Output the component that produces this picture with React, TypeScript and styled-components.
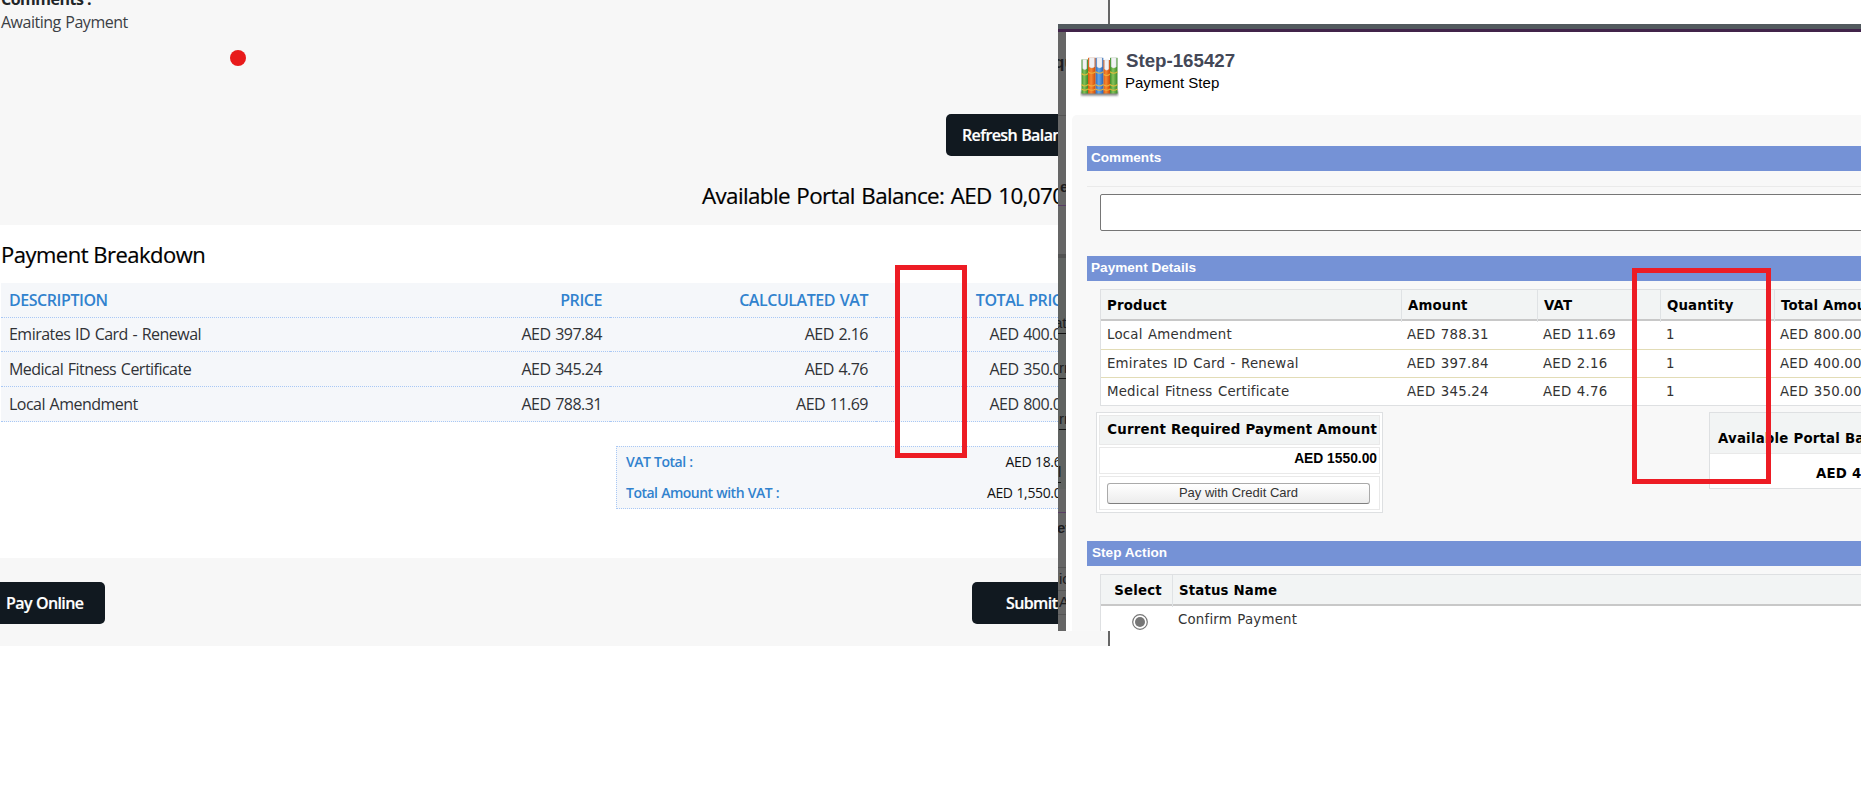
import React from "react";
import styled, { createGlobalStyle, css } from "styled-components";

const ui = `"Open Sans", "Noto Sans", sans-serif`;
const arial = `"Liberation Sans", Arial, sans-serif`;
const verdana = `"DejaVu Sans", Verdana, sans-serif`;

const Global = createGlobalStyle`
  *, *::before, *::after { box-sizing: border-box; }
  body { margin: 0; background: #fff; overflow: hidden; }
`;

const Stage = styled.div`
  position: relative;
  width: 1861px;
  height: 785px;
  overflow: hidden;
  background: #fff;
`;

/* ---------- portal page ---------- */

const Portal = styled.main`
  width: 1110px;
  height: 646px;
  border-right: 2px solid #666;
  background: #f7f7f7;
  display: flex;
  flex-direction: column;
  overflow: hidden;
  font-family: ${ui};
  font-size: 16px;
  color: #212529;
  white-space: nowrap;
`;

const Summary = styled.section`
  height: 225px;
  flex: none;
  display: flex;
  flex-direction: column;
`;

const CommentLabel = styled.div`
  height: 10px;
  padding-left: 1px;
  display: flex;
  align-items: flex-end;
  font-weight: 700;
  letter-spacing: -0.5px;
  line-height: 22px;
`;

const CommentText = styled.div`
  height: 24px;
  padding-left: 1px;
  line-height: 25px;
  color: #3c4045;
  letter-spacing: -0.5px;
  word-spacing: 1px;
`;

const RefreshRow = styled.div`
  display: flex;
  justify-content: flex-end;
  margin-top: 80px;
  padding-right: 8px;
`;

const DarkButton = styled.button<{ $w: number; $pad: number; $flatLeft?: boolean }>`
  width: ${(p) => p.$w}px;
  height: 42px;
  border: 0;
  border-radius: ${(p) => (p.$flatLeft ? "0 5px 5px 0" : "5px")};
  padding: 0 0 0 ${(p) => p.$pad}px;
  background: #111920;
  color: #fff;
  text-align: left;
  font: 600 16px ${ui};
  letter-spacing: -0.6px;
  word-spacing: 0.5px;
  -webkit-text-stroke: 0.2px #fff;
`;

const Balance = styled.div`
  margin-top: 25px;
  padding-left: 702px;
  font-size: 22.4px;
  line-height: 30px;
  letter-spacing: -0.62px;
  word-spacing: 1.3px;
  color: #000;
  -webkit-text-stroke: 0.2px #000;
`;

const Breakdown = styled.section`
  height: 333px;
  flex: none;
  background: #fff;
  padding: 14px 0 0 1px;
`;

const Heading = styled.h2`
  margin: 0;
  height: 44px;
  font-size: 22px;
  font-weight: 400;
  line-height: 30px;
  letter-spacing: -0.5px;
  color: #000;
  -webkit-text-stroke: 0.2px #000;
`;

const Grid = styled.div`
  width: 1077px;
  background: #f5f7fa;
`;

const GridRow = styled.div<{ $h: number; $head?: boolean }>`
  display: grid;
  grid-template-columns: 430px 179px 266px 202px;
  height: ${(p) => p.$h}px;
  > * { border-bottom: 1px dotted #a9c8f5; }
  line-height: ${(p) => p.$h - 1}px;
  color: #303236;
  letter-spacing: -0.52px;
  word-spacing: 1px;
  ${(p) =>
    p.$head &&
    css`
      color: #3182ce;
      font-weight: 600;
      letter-spacing: -0.45px;
    `}
`;

const GridCell = styled.div<{ $right?: boolean }>`
  padding: 0 8px;
  text-align: ${(p) => (p.$right ? "right" : "left")};
`;

const Totals = styled.div`
  margin: 24px 0 0 615px;
  width: 462px;
  height: 63px;
  border: 1px dotted #a9c8f5;
  background: #f5f7fa;
  padding: 0 8px 0 9px;
  font-size: 14px;
  font-weight: 600;
  letter-spacing: -0.5px;
`;

const TotalRow = styled.div`
  display: flex;
  justify-content: space-between;
  height: 31px;
  line-height: 30px;
  color: #3182ce;
  word-spacing: 0.5px;
`;

const TotalValue = styled.span`
  color: #111;
  font-weight: 500;
  letter-spacing: -0.35px;
`;

const Actions = styled.footer`
  display: flex;
  justify-content: space-between;
  padding: 24px 8px 0 0;
`;

/* ---------- annotations ---------- */

const Dot = styled.div`
  position: absolute;
  left: 230px;
  top: 50px;
  width: 16px;
  height: 16px;
  border-radius: 50%;
  background: #e81a1b;
`;

const Marker = styled.div<{ $x: number; $y: number; $w: number; $h: number }>`
  position: absolute;
  left: ${(p) => p.$x}px;
  top: ${(p) => p.$y}px;
  width: ${(p) => p.$w}px;
  height: ${(p) => p.$h}px;
  border: 5px solid #ed1c24;
`;

/* ---------- dialog ---------- */

const Overlay = styled.div`
  position: absolute;
  left: 1058px;
  top: 24px;
  width: 803px;
  height: 607px;
  overflow: hidden;
  border-top: 5px solid #525a5e;
  background: #fff;
  white-space: nowrap;
`;

const OverlayInner = styled.div`
  border-top: 3px solid #41244a;
  display: flex;
  height: 602px;
`;

const Backdrop = styled.div`
  width: 8px;
  flex: none;
  overflow: hidden;
  background: #666;
  font: 400 15px/20px ${arial};
  color: #1d1d1f;
`;

const Sliver = styled.div<{ $h: number; $bg?: string; $pad?: number; $line?: string; $bold?: boolean }>`
  height: ${(p) => p.$h}px;
  overflow: hidden;
  padding-top: ${(p) => p.$pad ?? 0}px;
  background: ${(p) => p.$bg ?? "#666"};
  ${(p) => p.$line && `border-bottom: 1px solid ${p.$line};`}
  font-weight: ${(p) => (p.$bold ? 700 : 400)};
`;

const Clip = styled.span<{ $shift: number; $u?: boolean; $size?: number }>`
  display: inline-block;
  height: 20px;
  margin-left: ${(p) => p.$shift}px;
  font-size: ${(p) => p.$size ?? 15}px;
  ${(p) => p.$u && "border-bottom: 1px solid #111; line-height: 18px;"}
`;

const Dialog = styled.section`
  flex: 1;
  min-width: 0;
  background: #fff;
`;

const DialogHead = styled.header`
  height: 83px;
  display: flex;
  padding: 25px 0 0 14px;
`;

const TitleBlock = styled.div`
  padding-left: 6px;
  font-family: ${arial};
`;

const Title = styled.div`
  margin-top: -8px;
  padding-left: 1px;
  font-size: 18.7px;
  font-weight: 700;
  line-height: 24px;
  color: #444857;
`;

const Subtitle = styled.div`
  font-size: 15px;
  line-height: 19px;
  color: #000;
`;

const Body = styled.div`
  margin-left: 6px;
  height: 516px;
  border-top-left-radius: 5px;
  background: #f8f8f8;
  padding: 31px 0 0 15px;
  overflow: hidden;
`;

const Bar = styled.div<{ $pad?: number }>`
  height: 25px;
  padding-left: ${(p) => p.$pad ?? 4}px;
  background: #7592d6;
  color: #fff;
  font: 700 13.6px/24px ${arial};
`;

const Rule = styled.div`
  height: 1px;
  margin-top: 15px;
  background: #eaeaea;
`;

const CommentBox = styled.textarea`
  display: block;
  margin: 7px 0 25px 13px;
  width: 790px;
  height: 37px;
  resize: none;
  border: 1px solid #767676;
  border-radius: 2px;
  background: #fff;
`;

const Sheet = styled.div<{ $cols: string }>`
  --cols: ${(p) => p.$cols};
  margin: 8px 0 0 13px;
  width: 900px;
  border: 1px solid #dee0e2;
  background: #fff;
  font-family: ${verdana};
  font-size: 13.33px;
  color: #333;
`;

const SheetHead = styled.div`
  display: grid;
  grid-template-columns: var(--cols);
  height: 31px;
  border-bottom: 2px solid #c8c8c8;
  background: #f2f4f4;
  color: #000;
  font-weight: 700;
  line-height: 32px;
  letter-spacing: 0.15px;
  > * + * { border-left: 1px solid #dfe2e4; }
  > * { padding-left: 6px; }
`;

const SheetRow = styled.div`
  display: grid;
  grid-template-columns: var(--cols);
  height: 28px;
  line-height: 28px;
  letter-spacing: 0.2px;
  word-spacing: 1px;
  & + & { border-top: 1px solid #e2dcb6; line-height: 27px; }
  > * { padding-left: 6px; }
`;

const Panels = styled.div`
  display: flex;
  align-items: flex-start;
  margin: 6px 0 28px 9px;
  font: 700 13.33px ${verdana};
  letter-spacing: 0.2px;
  color: #000;
`;

const PayPanel = styled.div`
  flex: none;
  width: 287px;
  height: 101px;
  border: 1px solid #dee0e2;
  background: #fff;
  padding: 2px;
  display: flex;
  flex-direction: column;
  gap: 2px;
`;

const PayCell = styled.div<{ $h: number; $bg?: string; $arial?: boolean }>`
  height: ${(p) => p.$h}px;
  border: 1px solid #e9e9e9;
  background: ${(p) => p.$bg ?? "#fff"};
  line-height: ${(p) => p.$h - 2}px;
  text-align: right;
  padding-right: 2px;
  ${(p) => p.$arial && `font: 700 13.8px/${p.$h - 5}px ${arial}; letter-spacing: 0;`}
`;

const CardButton = styled.button`
  display: block;
  width: 263px;
  height: 21px;
  margin: 6px 0 0 7px;
  padding: 0;
  border: 1px solid #aaa;
  border-bottom-color: #7f7f7f;
  border-radius: 3px;
  background: linear-gradient(#fff, #ececec);
  color: #333;
  font: 400 13px/18px ${arial};
`;

const PortalPanel = styled.div`
  flex: none;
  margin-left: 326px;
  width: 300px;
  height: 77px;
  border: 1px solid #dee0e2;
  background: #fff;
`;

const PortalPanelHead = styled.div`
  height: 41px;
  border-bottom: 1px solid #e9e9e9;
  background: #f2f4f4;
  padding: 11px 0 0 8px;
  line-height: 30px;
`;

const PortalPanelValue = styled.div`
  padding-left: 106px;
  line-height: 40px;
`;

const SelectHead = styled.span`
  text-align: center;
  padding-right: 3px;
`;

const RadioCell = styled.div`
  display: flex;
  align-items: flex-start;
  justify-content: center;
  padding-top: 8px;
`;

const Books = () => (
  <svg width="39" height="41" viewBox="0 0 39 41">
    <defs>
      <linearGradient id="g" x1="0" x2="1"><stop offset="0" stopColor="#3c8f2b" /><stop offset=".4" stopColor="#86c45a" /><stop offset="1" stopColor="#3a8a28" /></linearGradient>
      <linearGradient id="o" x1="0" x2="1"><stop offset="0" stopColor="#dc560c" /><stop offset=".4" stopColor="#f88a34" /><stop offset="1" stopColor="#cc4806" /></linearGradient>
      <linearGradient id="b" x1="0" x2="1"><stop offset="0" stopColor="#2f6fc0" /><stop offset=".4" stopColor="#62a6ea" /><stop offset="1" stopColor="#2c66b4" /></linearGradient>
      <filter id="s" x="-20%" y="-100%" width="140%" height="300%"><feGaussianBlur stdDeviation="1" /></filter>
    </defs>
    <rect x="1" y="34" width="37" height="4.5" fill="#555" opacity=".75" filter="url(#s)" />
    {[
      { x: 1.5, w: 6.5, y: 2.5, fill: "g" },
      { x: 30, w: 7.5, y: 0.8, fill: "g" },
      { x: 23.3, w: 6.7, y: 3, fill: "o" },
      { x: 8, w: 7.7, y: 0.8, fill: "o" },
      { x: 15.7, w: 7.6, y: 0.8, fill: "b" },
    ].map(({ x, w, y, fill }) => (
      <g key={x}>
        <rect x={x} y={y} width={w} height={36.5 - y} fill={`url(#${fill})`} />
        <path d={`M${x + 1.2} ${y}h${w - 2.4}v9q${-(w - 2.4) / 2} 2.4 ${-(w - 2.4)} 0z`} fill="#f2f2f5" stroke="#c9c9d0" strokeWidth=".3" />
        <path
          d={`M${x} ${y + 14}q${w / 2} 3 ${w} 0M${x} 27.5q${w / 2} 3 ${w} 0M${x} 32q${w / 2} 2.6 ${w} 0`}
          fill="none"
          stroke="#f2bb3a"
          strokeWidth="1.1"
          opacity=".85"
        />
      </g>
    ))}
  </svg>
);

const Radio = () => (
  <svg width="16" height="16" viewBox="0 0 16 16">
    <circle cx="8" cy="8" r="7.3" fill="#fff" stroke="#767676" strokeWidth="1.2" />
    <circle cx="8" cy="8" r="5" fill="#767676" />
  </svg>
);

const fees = [
  { h: 34, name: "Emirates ID Card - Renewal", price: "AED 397.84", vat: "AED 2.16", total: "AED 400.00" },
  { h: 35, name: "Medical Fitness Certificate", price: "AED 345.24", vat: "AED 4.76", total: "AED 350.00" },
  { h: 35, name: "Local Amendment", price: "AED 788.31", vat: "AED 11.69", total: "AED 800.00" },
];
const sheetRows = [fees[2], fees[0], fees[1]];

export default function App() {
  return (
    <Stage>
      <Global />
      <Portal>
        <Summary>
          <CommentLabel>Comments :</CommentLabel>
          <CommentText>Awaiting Payment</CommentText>
          <RefreshRow><DarkButton $w={154} $pad={16}>Refresh Balance</DarkButton></RefreshRow>
          <Balance>Available Portal Balance: AED 10,070</Balance>
        </Summary>
        <Breakdown>
          <Heading>Payment Breakdown</Heading>
          <Grid>
            <GridRow $h={35} $head>
              <GridCell>DESCRIPTION</GridCell>
              <GridCell $right>PRICE</GridCell>
              <GridCell $right>CALCULATED VAT</GridCell>
              <GridCell $right>TOTAL PRICE</GridCell>
            </GridRow>
            {fees.map((f) => (
              <GridRow key={f.name} $h={f.h}>
                <GridCell>{f.name}</GridCell>
                <GridCell $right>{f.price}</GridCell>
                <GridCell $right>{f.vat}</GridCell>
                <GridCell $right>{f.total}</GridCell>
              </GridRow>
            ))}
          </Grid>
          <Totals>
            <TotalRow>VAT Total :<TotalValue>AED 18.61</TotalValue></TotalRow>
            <TotalRow>Total Amount with VAT :<TotalValue>AED 1,550.00</TotalValue></TotalRow>
          </Totals>
        </Breakdown>
        <Actions>
          <DarkButton $w={105} $pad={6} $flatLeft>Pay Online</DarkButton>
          <DarkButton $w={128} $pad={34}>Submit</DarkButton>
        </Actions>
      </Portal>

      <Overlay>
        <OverlayInner>
          <Backdrop>
            <Sliver $h={84} $pad={21} $line="#555" $bold><Clip $shift={-4} $size={17}>qu</Clip></Sliver>
            <Sliver $h={90} $pad={61} $line="#5a3f66" $bold><Clip $shift={2}>e</Clip></Sliver>
            <Sliver $h={48} />
            <Sliver $h={4} $bg="#525252" />
            <Sliver $h={76} $bg="#606361" $pad={55}><Clip $shift={-4} $u>at</Clip></Sliver>
            <Sliver $h={46} $bg="#606361" $pad={24}><Clip $shift={1} $u>rn</Clip></Sliver>
            <Sliver $h={50} $bg="#606361" $pad={29}><Clip $shift={1} $u>rn</Clip></Sliver>
            <Sliver $h={59} $bg="#606361" $pad={32}><Clip $shift={0} $u>l</Clip></Sliver>
            <Sliver $h={24} $line="#5a3f66" />
            <Sliver $h={55} $pad={5} $line="#555" $bold><Clip $shift={-1}>ev</Clip></Sliver>
            <Sliver $h={23} $pad={1} $line="#555"><Clip $shift={1}>ic</Clip></Sliver>
            <Sliver $h={24} $pad={1} $line="#555"><Clip $shift={1}>A</Clip></Sliver>
            <Sliver $h={16} />
          </Backdrop>
          <Dialog>
            <DialogHead>
              <Books />
              <TitleBlock>
                <Title>Step-165427</Title>
                <Subtitle>Payment Step</Subtitle>
              </TitleBlock>
            </DialogHead>
            <Body>
              <Bar>Comments</Bar>
              <Rule />
              <CommentBox />
              <Bar>Payment Details</Bar>
              <Sheet $cols="300px 136px 123px 114px 200px">
                <SheetHead>
                  <span>Product</span><span>Amount</span><span>VAT</span><span>Quantity</span><span>Total Amount</span>
                </SheetHead>
                {sheetRows.map((r) => (
                  <SheetRow key={r.name}>
                    <span>{r.name}</span><span>{r.price}</span><span>{r.vat}</span><span>1</span><span>{r.total}</span>
                  </SheetRow>
                ))}
              </Sheet>
              <Panels>
                <PayPanel>
                  <PayCell $h={30} $bg="#f2f4f4">Current Required Payment Amount</PayCell>
                  <PayCell $h={27} $arial>AED 1550.00</PayCell>
                  <PayCell $h={35}><CardButton>Pay with Credit Card</CardButton></PayCell>
                </PayPanel>
                <PortalPanel>
                  <PortalPanelHead>Available Portal Balance</PortalPanelHead>
                  <PortalPanelValue>AED 4</PortalPanelValue>
                </PortalPanel>
              </Panels>
              <Bar $pad={5}>Step Action</Bar>
              <Sheet $cols="71px 800px">
                <SheetHead>
                  <SelectHead>Select</SelectHead><span>Status Name</span>
                </SheetHead>
                <SheetRow>
                  <RadioCell><Radio /></RadioCell><span>Confirm Payment</span>
                </SheetRow>
              </Sheet>
            </Body>
          </Dialog>
        </OverlayInner>
      </Overlay>

      <Dot />
      <Marker $x={895} $y={265} $w={72} $h={193} />
      <Marker $x={1632} $y={268} $w={139} $h={216} />
    </Stage>
  );
}
